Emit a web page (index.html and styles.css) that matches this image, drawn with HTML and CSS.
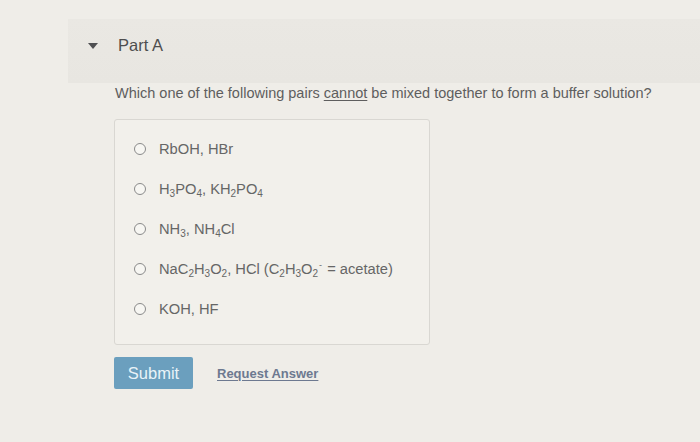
FILE: index.html
```html
<!DOCTYPE html>
<html>
<head>
<meta charset="utf-8">
<link rel="stylesheet" href="styles.css">
</head>
<body>
<div class="page">
  <div class="part-header">
    <span class="caret"></span>
    <span class="part-title">Part A</span>
  </div>
  <div class="part-body">
    <p class="question">Which one of the following pairs <u>cannot</u> be mixed together to form a buffer solution?</p>
    <div class="choices">
      <label class="choice"><span class="radio"></span><span class="ctext">RbOH, HBr</span></label>
      <label class="choice"><span class="radio"></span><span class="ctext">H<sub>3</sub>PO<sub>4</sub>, KH<sub>2</sub>PO<sub>4</sub></span></label>
      <label class="choice"><span class="radio"></span><span class="ctext">NH<sub>3</sub>, NH<sub>4</sub>Cl</span></label>
      <label class="choice"><span class="radio"></span><span class="ctext">NaC<sub>2</sub>H<sub>3</sub>O<sub>2</sub>, HCl (C<sub>2</sub>H<sub>3</sub>O<sub>2</sub><sup class="ion">-</sup> = acetate)</span></label>
      <label class="choice"><span class="radio"></span><span class="ctext">KOH, HF</span></label>
    </div>
    <div class="actions">
      <button class="submit">Submit</button>
      <a class="request">Request Answer</a>
    </div>
  </div>
</div>
</body>
</html>
```
FILE: styles.css
```css
html, body {
  margin: 0;
  padding: 0;
}
body {
  background: #efede8;
  font-family: "Liberation Sans", Arial, sans-serif;
  color: #5f5f5f;
  width: 700px;
  height: 442px;
  overflow: hidden;
}
.page {
  padding-top: 19px;
}
.part-header {
  margin-left: 68px;
  height: 64px;
  background: linear-gradient(#eae8e3, #e8e6e1);
  display: flex;
  align-items: flex-start;
  padding-left: 20px;
  box-sizing: border-box;
  padding-top: 17px;
}
.caret {
  width: 0;
  height: 0;
  border-left: 5px solid transparent;
  border-right: 5px solid transparent;
  border-top: 6px solid #4f5052;
  margin-top: 7px;
}
.part-title {
  margin-left: 20px;
  font-size: 16.5px;
  color: #4e4e4e;
  line-height: 19px;
}
.part-body {
  padding-left: 114px;
}
.question {
  margin: 1px 0 0 1px;
  font-size: 14.5px;
  line-height: 18px;
  color: #5e5e5e;
}
.question u {
  text-underline-offset: 2px;
}
.choices {
  margin-top: 17px;
  width: 316px;
  height: 226px;
  box-sizing: border-box;
  border: 1px solid #d9d7d2;
  border-radius: 3px;
  background: #f2f0eb;
  padding: 9px 0 0 19px;
}
.choice {
  display: flex;
  align-items: center;
  height: 40px;
}
.radio {
  width: 10px;
  height: 10px;
  border: 1.6px solid #8a8a8a;
  border-radius: 50%;
  background: #f7f6f2;
}
.ctext {
  margin-left: 13px;
  font-size: 14.7px;
  color: #666;
}
sub {
  font-size: 10px;
  vertical-align: -3px;
  line-height: 0;
}
sup.ion {
  font-size: 9px;
  vertical-align: 6px;
  line-height: 0;
  margin-left: 1px;
  margin-right: 1px;
}
.actions {
  margin-top: 12px;
  display: flex;
  align-items: center;
}
.submit {
  width: 79px;
  height: 32px;
  border: none;
  border-radius: 2px;
  background: #6b9fbe;
  color: #e9f3f8;
  font-family: "Liberation Sans", Arial, sans-serif;
  font-size: 16.5px;
  padding: 0;
}
.request {
  margin-left: 24px;
  font-size: 13px;
  font-weight: bold;
  color: #6d7990;
  text-decoration: underline;
  text-underline-offset: 2px;
}
```
